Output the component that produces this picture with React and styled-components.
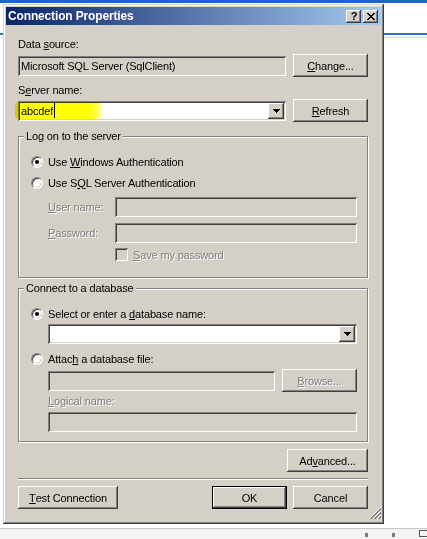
import React from "react";
import styled, { createGlobalStyle, css } from "styled-components";

const FACE = "#d4d0c8";

const GlobalStyle = createGlobalStyle`
  html, body { margin: 0; padding: 0; background: #fff; }
  body {
    font-family: "Liberation Sans", Arial, sans-serif;
    font-size: 11px;
    letter-spacing: -0.15px;
    color: #000;
  }
  * { box-sizing: border-box; }
`;

const raised = css`
  box-shadow: inset -1px -1px 0 #404040, inset 1px 1px 0 #fff,
    inset -2px -2px 0 #808080, inset 2px 2px 0 ${FACE};
`;

const sunken = css`
  box-shadow: inset 1px 1px 0 #808080, inset -1px -1px 0 #fff,
    inset 2px 2px 0 #404040, inset -2px -2px 0 ${FACE};
`;

const disabledText = css`
  color: #808080;
  text-shadow: 1px 1px 0 #fff;
`;

const Desktop = styled.div`
  position: relative;
  width: 427px;
  height: 539px;
  overflow: hidden;
  background: #fff;
  display: flex;
  flex-direction: column;
`;

const TopStrip = styled.div`
  height: 3px;
  background: #1b64c8;
`;

const HeaderSpace = styled.div`
  height: 30px;
`;

const HeaderRule = styled.div`
  height: 2px;
  background: #2c6fc6;
  margin-bottom: 2px;
`;

const HeaderShade = styled.div`
  height: 1px;
  background: #e2e2e2;
`;

const Main = styled.div`
  flex: 1;
`;

const StatusBar = styled.div`
  height: 11px;
  border-top: 1px solid #c9c9c9;
  background: #f4f4f4;
  display: flex;
  justify-content: flex-end;
  align-items: flex-end;
  gap: 24px;
`;

const StatusMark = styled.span`
  width: ${(p) => (p.$box ? 8 : 3)}px;
  height: ${(p) => (p.$box ? 7 : 4)}px;
  margin-bottom: 2px;
  border: ${(p) => (p.$box ? "1px solid #555" : "none")};
  border-right: none;
  background: ${(p) => (p.$box ? "transparent" : "#777")};
`;

const Window = styled.div`
  position: absolute;
  left: 3px;
  top: 4px;
  width: 381px;
  height: 520px;
  padding: 3px;
  background: ${FACE};
  box-shadow: inset -1px -1px 0 #404040, inset 1px 1px 0 ${FACE},
    inset -2px -2px 0 #808080, inset 2px 2px 0 #fff;
  display: flex;
  flex-direction: column;
`;

const TitleBar = styled.div`
  height: 18px;
  flex: none;
  background: linear-gradient(to right, #0a246a, #a6caf0);
  display: flex;
  align-items: center;
  padding: 0 3px 0 2px;
`;

const TitleText = styled.div`
  flex: 1;
  color: #fff;
  font-weight: bold;
  font-size: 12px;
  letter-spacing: -0.15px;
`;

const CaptionButton = styled.div`
  width: 15px;
  height: 13px;
  margin-left: ${(p) => (p.$gap ? 2 : 0)}px;
  background: ${FACE};
  ${raised};
  display: flex;
  align-items: center;
  justify-content: center;
  font-weight: bold;
  font-size: 11px;
  line-height: 11px;
  padding-left: 1px;
`;

const Body = styled.div`
  position: relative;
  flex: 1;
  padding: 0 13px 0 12px;
  display: flex;
  flex-direction: column;
`;

const Label = styled.div`
  height: 13px;
  line-height: 13px;
  margin-top: ${(p) => p.$mt || 0}px;
  padding-left: ${(p) => p.$indent || 0}px;
  white-space: nowrap;
  ${(p) => p.$disabled && disabledText};
`;

const Row = styled.div`
  display: flex;
  align-items: center;
  gap: ${(p) => (p.$gap == null ? 7 : p.$gap)}px;
  height: ${(p) => p.$h || 23}px;
  margin-top: ${(p) => p.$mt || 0}px;
  padding-left: ${(p) => p.$indent || 0}px;
  justify-content: ${(p) => p.$justify || "flex-start"};
`;

const TextBox = styled.div`
  flex: 1;
  height: 20px;
  padding: 0 3px;
  background: ${FACE};
  ${sunken};
  display: flex;
  align-items: center;
  white-space: nowrap;
`;

const Combo = styled.div`
  position: relative;
  flex: 1;
  height: 20px;
  padding: 2px;
  background: #fff;
  ${sunken};
  display: flex;
  align-items: stretch;
`;

const ComboText = styled.div`
  flex: 1;
  display: flex;
  align-items: center;
  padding-left: 1px;
`;

const Caret = styled.span`
  display: inline-block;
  width: 1px;
  height: 15px;
  margin-left: 1px;
  background: #000;
`;

const Highlight = styled.span`
  position: absolute;
  left: -3px;
  top: 1px;
  width: 89px;
  height: 17px;
  border-radius: 3px 9px 7px 4px;
  background: linear-gradient(
    to right,
    #ffff00 0%,
    #ffff00 84%,
    rgba(255, 255, 0, 0.6) 94%,
    rgba(255, 255, 0, 0) 100%
  );
  mix-blend-mode: multiply;
  filter: blur(0.5px);
  pointer-events: none;
`;

const DropButton = styled.div`
  width: 16px;
  flex: none;
  background: ${FACE};
  ${raised};
  display: flex;
  align-items: center;
  justify-content: center;
`;

const Button = styled.div`
  width: ${(p) => p.$w || 75}px;
  height: 23px;
  flex: none;
  background: ${FACE};
  border: ${(p) => (p.$default ? "1px solid #000" : "none")};
  ${raised};
  display: flex;
  align-items: center;
  justify-content: center;
  white-space: nowrap;
  ${(p) => p.$disabled && disabledText};
`;

const GroupBox = styled.div`
  height: ${(p) => p.$h}px;
  margin-top: ${(p) => p.$mt}px;
  border: 1px solid #808080;
  box-shadow: inset 1px 1px 0 #fff, 1px 1px 0 #fff;
  padding: 0 10px 0 12px;
  display: flex;
  flex-direction: column;
`;

const GroupCaption = styled.div`
  width: fit-content;
  height: 13px;
  line-height: 13px;
  margin: -7px 0 0 -7px;
  padding: 0 2px;
  background: ${FACE};
  white-space: nowrap;
`;

const OptionRow = styled.div`
  display: flex;
  align-items: center;
  gap: 5px;
  height: 13px;
  margin-top: ${(p) => p.$mt || 0}px;
  padding-left: ${(p) => p.$indent || 0}px;
  white-space: nowrap;
  ${(p) => p.$disabled && disabledText};
`;

const Radio = styled.span`
  width: 12px;
  height: 12px;
  flex: none;
  border-radius: 50%;
  background: #fff;
  border: 1px solid;
  border-color: #808080 #fff #fff #808080;
  box-shadow: inset 1px 1px 0 #404040, inset -1px -1px 0 ${FACE};
  display: flex;
  align-items: center;
  justify-content: center;
  &::after {
    content: "";
    width: 4px;
    height: 4px;
    border-radius: 50%;
    background: ${(p) => (p.$checked ? "#000" : "transparent")};
  }
`;

const CheckBox = styled.span`
  width: 13px;
  height: 13px;
  flex: none;
  background: ${FACE};
  ${sunken};
`;

const FieldLabel = styled.div`
  width: 67px;
  flex: none;
  ${(p) => p.$disabled && disabledText};
`;

const Separator = styled.div`
  height: 2px;
  margin-top: ${(p) => p.$mt}px;
  border-top: 1px solid #808080;
  border-bottom: 1px solid #fff;
`;

const Spacer = styled.div`
  flex: 1;
`;

const Grip = styled.svg`
  position: absolute;
  right: 0;
  bottom: 2px;
`;

const DownArrow = () => (
  <svg width="7" height="4" viewBox="0 0 7 4">
    <path d="M0 0h7v1H0zM1 1h5v1H1zM2 2h3v1H2zM3 3h1v1H3z" fill="#000" />
  </svg>
);

const CloseGlyph = () => (
  <svg width="8" height="7" viewBox="0 0 8 7">
    <path
      d="M0 0h2v1H0zM6 0h2v1H6zM1 1h2v1H1zM5 1h2v1H5zM2 2h4v1H2zM3 3h2v1H3zM2 4h4v1H2zM1 5h2v1H1zM5 5h2v1H5zM0 6h2v1H0zM6 6h2v1H6z"
      fill="#000"
    />
  </svg>
);

const SizeGrip = () => (
  <Grip width="13" height="13" viewBox="0 0 13 13">
    {[1, 5, 9].map((o) => (
      <g key={o}>
        <line x1={o} y1="13" x2="13" y2={o} stroke="#fff" strokeWidth="1" />
        <line x1={o + 1} y1="13" x2="13" y2={o + 1} stroke="#808080" strokeWidth="1" />
        <line x1={o + 2} y1="13" x2="13" y2={o + 2} stroke="#808080" strokeWidth="1" />
      </g>
    ))}
  </Grip>
);

export default function App() {
  return (
    <Desktop>
      <GlobalStyle />
      <TopStrip />
      <HeaderSpace />
      <HeaderRule />
      <HeaderShade />
      <Main />
      <StatusBar>
        <StatusMark />
        <StatusMark />
        <StatusMark $box />
      </StatusBar>

      <Window>
        <TitleBar>
          <TitleText>Connection Properties</TitleText>
          <CaptionButton>?</CaptionButton>
          <CaptionButton $gap>
            <CloseGlyph />
          </CaptionButton>
        </TitleBar>

        <Body>
          <Label $mt={13}>
            Data <u>s</u>ource:
          </Label>
          <Row $mt={3}>
            <TextBox>Microsoft SQL Server (SqlClient)</TextBox>
            <Button>
              <u>C</u>hange...
            </Button>
          </Row>

          <Label $mt={7}>
            S<u>e</u>rver name:
          </Label>
          <Row $mt={2}>
            <Combo>
              <ComboText>
                abcdef
                <Caret />
              </ComboText>
              <DropButton>
                <DownArrow />
              </DropButton>
              <Highlight />
            </Combo>
            <Button>
              <u>R</u>efresh
            </Button>
          </Row>

          <GroupBox $mt={14} $h={142}>
            <GroupCaption>Log on to the server</GroupCaption>
            <OptionRow $mt={12}>
              <Radio $checked />
              <span>
                Use <u>W</u>indows Authentication
              </span>
            </OptionRow>
            <OptionRow $mt={8}>
              <Radio />
              <span>
                Use S<u>Q</u>L Server Authentication
              </span>
            </OptionRow>
            <Row $mt={8} $h={20} $gap={0} $indent={17}>
              <FieldLabel $disabled>
                <u>U</u>ser name:
              </FieldLabel>
              <TextBox />
            </Row>
            <Row $mt={6} $h={20} $gap={0} $indent={17}>
              <FieldLabel $disabled>
                <u>P</u>assword:
              </FieldLabel>
              <TextBox />
            </Row>
            <OptionRow $mt={5} $indent={84} $disabled>
              <CheckBox />
              <span>
                <u>S</u>ave my password
              </span>
            </OptionRow>
          </GroupBox>

          <GroupBox $mt={10} $h={154}>
            <GroupCaption>Connect to a database</GroupCaption>
            <OptionRow $mt={12}>
              <Radio $checked />
              <span>
                Select or enter a <u>d</u>atabase name:
              </span>
            </OptionRow>
            <Row $mt={4} $h={20} $indent={17}>
              <Combo>
                <ComboText />
                <DropButton>
                  <DownArrow />
                </DropButton>
              </Combo>
            </Row>
            <OptionRow $mt={8}>
              <Radio />
              <span>
                Attac<u>h</u> a database file:
              </span>
            </OptionRow>
            <Row $mt={4} $indent={17}>
              <TextBox />
              <Button $disabled>
                <u>B</u>rowse...
              </Button>
            </Row>
            <Label $mt={3} $indent={17} $disabled>
              <u>L</u>ogical name:
            </Label>
            <Row $mt={4} $h={20} $indent={17}>
              <TextBox />
            </Row>
          </GroupBox>

          <Row $mt={7} $justify="flex-end">
            <Button $w={81}>
              Ad<u>v</u>anced...
            </Button>
          </Row>

          <Separator $mt={6} />

          <Row $mt={6} $gap={6}>
            <Button $w={100}>
              <u>T</u>est Connection
            </Button>
            <Spacer />
            <Button $default>OK</Button>
            <Button>Cancel</Button>
          </Row>

          <SizeGrip />
        </Body>
      </Window>
    </Desktop>
  );
}
